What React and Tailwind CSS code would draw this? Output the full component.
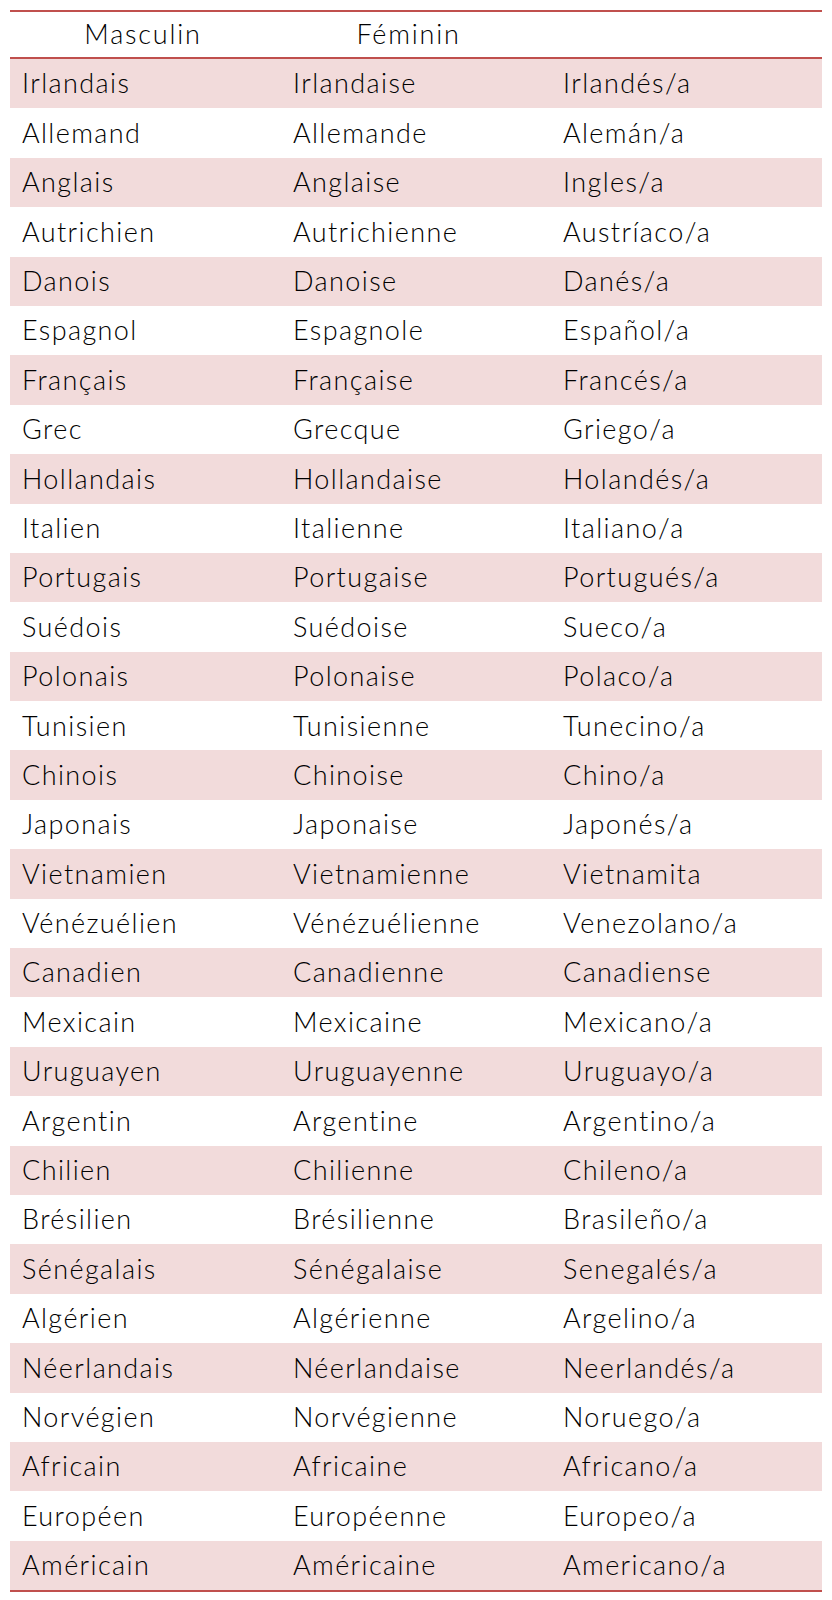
const ROWS = [
  ['Irlandais', 'Irlandaise', 'Irlandés/a'],
  ['Allemand', 'Allemande', 'Alemán/a'],
  ['Anglais', 'Anglaise', 'Ingles/a'],
  ['Autrichien', 'Autrichienne', 'Austríaco/a'],
  ['Danois', 'Danoise', 'Danés/a'],
  ['Espagnol', 'Espagnole', 'Español/a'],
  ['Français', 'Française', 'Francés/a'],
  ['Grec', 'Grecque', 'Griego/a'],
  ['Hollandais', 'Hollandaise', 'Holandés/a'],
  ['Italien', 'Italienne', 'Italiano/a'],
  ['Portugais', 'Portugaise', 'Portugués/a'],
  ['Suédois', 'Suédoise', 'Sueco/a'],
  ['Polonais', 'Polonaise', 'Polaco/a'],
  ['Tunisien', 'Tunisienne', 'Tunecino/a'],
  ['Chinois', 'Chinoise', 'Chino/a'],
  ['Japonais', 'Japonaise', 'Japonés/a'],
  ['Vietnamien', 'Vietnamienne', 'Vietnamita'],
  ['Vénézuélien', 'Vénézuélienne', 'Venezolano/a'],
  ['Canadien', 'Canadienne', 'Canadiense'],
  ['Mexicain', 'Mexicaine', 'Mexicano/a'],
  ['Uruguayen', 'Uruguayenne', 'Uruguayo/a'],
  ['Argentin', 'Argentine', 'Argentino/a'],
  ['Chilien', 'Chilienne', 'Chileno/a'],
  ['Brésilien', 'Brésilienne', 'Brasileño/a'],
  ['Sénégalais', 'Sénégalaise', 'Senegalés/a'],
  ['Algérien', 'Algérienne', 'Argelino/a'],
  ['Néerlandais', 'Néerlandaise', 'Neerlandés/a'],
  ['Norvégien', 'Norvégienne', 'Noruego/a'],
  ['Africain', 'Africaine', 'Africano/a'],
  ['Européen', 'Européenne', 'Europeo/a'],
  ['Américain', 'Américaine', 'Americano/a'],
]

export default function App() {
  return (
    <div className="bg-white w-[832px] pt-[10px] pb-[10px] font-['Lato','Open_Sans',sans-serif] text-black">
      <div className="mx-[10px] border-t-2 border-b-2 border-[#c0504d]">
        {/* header */}
        <div className="grid grid-cols-[266px_265px_1fr] h-[47px] items-center border-b-2 border-[#c0504d] text-[27px] font-light tracking-[1.8px]">
          <div className="text-center">Masculin</div>
          <div className="text-center">Féminin</div>
          <div />
        </div>

        {ROWS.map((r, i) => (
          <div key={r[0]}
            className={`grid grid-cols-[271px_270px_1fr] h-[49.4px] items-center text-[27px] tracking-[1.4px] font-light ${i % 2 === 0 ? 'bg-[#f2dbdb]' : 'bg-white'}`}>
            <div className="pl-[12px]">{r[0]}</div>
            <div className="pl-[12px]">{r[1]}</div>
            <div className="pl-[12px]">{r[2]}</div>
          </div>
        ))}
      </div>
    </div>
  )
}
